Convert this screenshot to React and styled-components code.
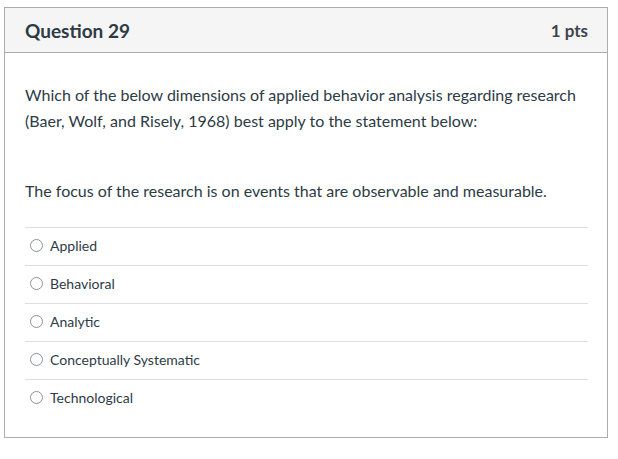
import styled, { createGlobalStyle } from 'styled-components';

const Global = createGlobalStyle`
  body {
    margin: 0;
    background: #fff;
    font-family: Lato, "Liberation Sans", sans-serif;
    color: #2d3b45;
  }
`;

const Page = styled.div`
  padding: 7px 0 0 4px;
`;

const Card = styled.div`
  width: 604px;
  height: 431px;
  box-sizing: border-box;
  border: 1px solid #a9adb0;
  display: flex;
  flex-direction: column;
`;

const Header = styled.div`
  height: 45px;
  box-sizing: border-box;
  background: #f5f5f5;
  border-bottom: 1px solid #a9adb0;
  display: flex;
  align-items: center;
  justify-content: space-between;
  padding: 0 19px 0 20px;
`;

const Title = styled.h2`
  margin: 0;
  font-size: 19px;
  font-weight: 700;
  color: #2d3b45;
`;

const Points = styled.span`
  font-size: 17px;
  font-weight: 700;
  color: #3d454c;
`;

const Body = styled.div`
  padding: 29px 19px 0 20px;
`;

const Text = styled.p`
  margin: 0;
  font-size: 16px;
  line-height: 26px;
  color: #2d3b45;
  margin-top: ${p => p.gap || 0}px;
`;

const Answers = styled.div`
  margin-top: 23px;
`;

const Option = styled.label`
  display: flex;
  align-items: center;
  gap: 7px;
  height: 38px;
  box-sizing: border-box;
  padding: 0 0 3px 5px;
  border-top: 1px solid #dcdee0;
  font-size: 14px;
  color: #2d3b45;
`;

const Radio = styled.span`
  width: 11px;
  height: 11px;
  border: 1px solid #8b9298;
  border-radius: 50%;
  background: #fff;
`;

const options = [
  'Applied',
  'Behavioral',
  'Analytic',
  'Conceptually Systematic',
  'Technological',
];

export default function App() {
  return (
    <>
      <Global />
      <Page>
        <Card>
          <Header>
            <Title>Question 29</Title>
            <Points>1 pts</Points>
          </Header>
          <Body>
            <Text>
              Which of the below dimensions of applied behavior analysis regarding research
              (Baer, Wolf, and Risely, 1968) best apply to the statement below:
            </Text>
            <Text gap={44}>
              The focus of the research is on events that are observable and measurable.
            </Text>
            <Answers>
              {options.map(o => (
                <Option key={o}>
                  <Radio />
                  {o}
                </Option>
              ))}
            </Answers>
          </Body>
        </Card>
      </Page>
    </>
  );
}
